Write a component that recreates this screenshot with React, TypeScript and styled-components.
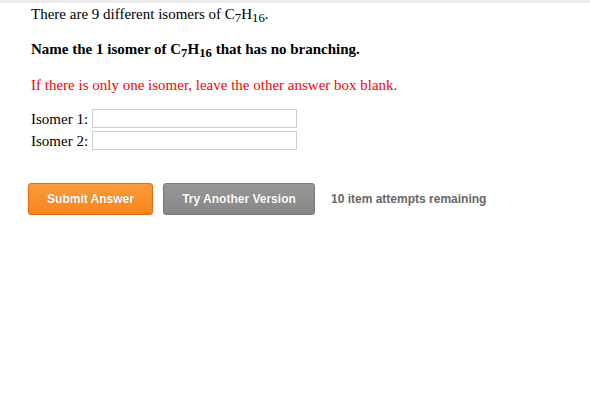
import React from "react"
import styled, { createGlobalStyle } from "styled-components"

const Global = createGlobalStyle`
  html, body {
    margin: 0;
    padding: 0;
    background: #fff;
  }
  body {
    font-family: "Liberation Serif", "Times New Roman", serif;
    font-size: 15px;
    color: #000;
  }
`

export default function App() {
  return (
    <>
      <Global />
      <TopBar />
      <Content>
        <Para>
          There are 9 different isomers of C<Sub>7</Sub>H<Sub>16</Sub>.
        </Para>
        <Para $top={17} $bold>
          Name the 1 isomer of C<Sub>7</Sub>H<Sub>16</Sub> that has no branching.
        </Para>
        <Para $top={18} $red>
          If there is only one isomer, leave the other answer box blank.
        </Para>
        <Form>
          <Row>
            <Label>Isomer 1:</Label>
            <Input type='text' />
          </Row>
          <Row>
            <Label>Isomer 2:</Label>
            <Input type='text' />
          </Row>
        </Form>
        <Actions>
          <Button $variant='submit'>Submit Answer</Button>
          <Button $variant='retry'>Try Another Version</Button>
          <Attempts>10 item attempts remaining</Attempts>
        </Actions>
      </Content>
    </>
  )
}

const TopBar = styled.div`
  height: 3px;
  background: #ececec;
`

const Content = styled.div`
  padding: 2px 0 0 28px;
`

const Para = styled.p<{ $top?: number; $bold?: boolean; $red?: boolean }>`
  margin: ${(p) => p.$top ?? 0}px 0 0 3px;
  line-height: 18px;
  font-weight: ${(p) => (p.$bold ? "bold" : "normal")};
  color: ${(p) => (p.$red ? "#ff0000" : "#000")};
`

const Sub = styled.sub`
  font-size: 0.85em;
  line-height: 0;
  vertical-align: -0.25em;
`

const Form = styled.div`
  margin: 15px 0 0 3px;
  display: flex;
  flex-direction: column;
  gap: 3px;
`

const Row = styled.div`
  display: flex;
  align-items: center;
`

const Label = styled.span`
  line-height: 18px;
  margin-right: 4px;
`

const Input = styled.input`
  box-sizing: border-box;
  width: 205px;
  height: 19px;
  border: 1px solid #cccccc;
  margin: 0;
  padding: 0 3px;
  outline: none;
  font-family: inherit;
`

const Actions = styled.div`
  margin-top: 33px;
  display: flex;
  align-items: center;
`

const Button = styled.button<{ $variant: "submit" | "retry" }>`
  box-sizing: border-box;
  height: 32px;
  width: ${(p) => (p.$variant === "submit" ? "125px" : "152px")};
  margin-right: ${(p) => (p.$variant === "submit" ? "10px" : "16px")};
  border-radius: 3px;
  border: 1px solid
    ${(p) => (p.$variant === "submit" ? "#e8660d" : "#7a7a7a")};
  background: ${(p) =>
    p.$variant === "submit"
      ? "linear-gradient(#fb9a3a, #f7861c)"
      : "linear-gradient(#979797, #878787)"};
  color: #fff;
  font-family: "Liberation Sans", Arial, sans-serif;
  font-weight: bold;
  font-size: 12px;
  text-shadow: 0 0 1px rgba(0, 0, 0, 0.25);
  box-shadow: 0 1px 1px rgba(0, 0, 0, 0.15);
  padding: 0;
  cursor: pointer;
`

const Attempts = styled.span`
  font-family: "Liberation Sans", Arial, sans-serif;
  font-weight: bold;
  font-size: 12px;
  color: #666;
`
